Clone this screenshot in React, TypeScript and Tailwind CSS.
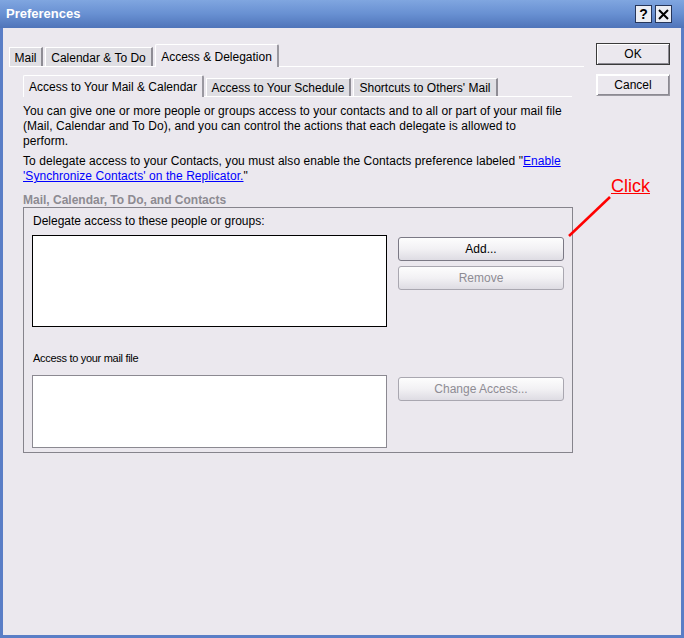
function Tab({ label, width, active }: { label: string; width: number; active?: boolean }) {
  return (
    <div
      style={{ width }}
      className={
        active
          ? "h-full -mb-px flex items-center justify-center bg-[#ebe8ee] border-t border-l border-white border-r-2 border-r-[#9a98a0] rounded-t-[2px]"
          : "h-[calc(100%-4px)] flex items-center justify-center bg-[#dfdee3] border-t border-l border-white border-r-2 border-r-[#8e8c94]"
      }
    >
      <span className="pt-[1px] whitespace-nowrap">{label}</span>
    </div>
  );
}

function XpButton({ label, disabled }: { label: string; disabled?: boolean }) {
  return (
    <div
      className={
        "w-[166px] h-[24px] flex items-center justify-center rounded-[3px] border bg-gradient-to-b from-[#fdfdfd] via-[#f2f1f4] to-[#dedce3] " +
        (disabled ? "border-[#a9a7b0] text-[#8e8c94]" : "border-[#7b7985] text-black")
      }
    >
      {label}
    </div>
  );
}

function DialogButton({ label, primary }: { label: string; primary?: boolean }) {
  return (
    <div
      className={
        "w-[74px] h-[22px] flex items-center justify-center bg-[#ebe8ee] shadow-[inset_1px_1px_0_#ffffff,inset_-1px_-1px_0_#8c8a92] " +
        (primary ? "border border-[#3a3a3a]" : "border border-[#9c9aa2] border-t-white border-l-white")
      }
    >
      {label}
    </div>
  );
}

export default function App() {
  return (
    <div className="relative w-[684px] h-[638px] flex flex-col bg-[#5a7ec6] font-['Liberation_Sans',Arial,sans-serif] text-[12px] text-black">
      {/* title bar */}
      <div className="h-[28px] flex items-center justify-between pl-[6px] pr-[12px] bg-gradient-to-b from-[#80a6e0] via-[#6890d2] to-[#4f74b9]">
        <span className="text-white font-bold text-[13px]">Preferences</span>
        <div className="flex gap-[3px]">
          <div className="w-[17px] h-[18px] flex items-center justify-center bg-[#eceef4] border border-[#26365a] text-[14px] font-bold leading-none">?</div>
          <div className="w-[17px] h-[18px] flex items-center justify-center bg-[#eceef4] border border-[#26365a]">
            <svg width="11" height="11" viewBox="0 0 11 11">
              <path d="M1 1 L10 10 M10 1 L1 10" stroke="#000" strokeWidth="2" />
            </svg>
          </div>
        </div>
      </div>

      {/* body */}
      <div className="mx-[3px] mb-[3px] flex-1 bg-[#ebe8ee]">
        <div className="flex pt-[15px] pl-[6px]">
          <div className="w-[575px]">
            <div className="h-[24px] flex items-end gap-[2px] border-b border-white">
              <Tab label="Mail" width={34} />
              <Tab label="Calendar & To Do" width={108} />
              <Tab label="Access & Delegation" width={124} active />
            </div>

            <div className="pl-[14px]">
              <div className="mt-[7px] w-[549px] h-[23px] flex items-end gap-[2px] border-b border-white">
                <Tab label="Access to Your Mail & Calendar" width={181} active />
                <Tab label="Access to Your Schedule" width={145} />
                <Tab label="Shortcuts to Others' Mail" width={145} />
              </div>

              <p className="mt-[7px] leading-[15px] whitespace-nowrap tracking-[0.06px]">
                You can give one or more people or groups access to your contacts and to all or part of your mail file
                <br />
                (Mail, Calendar and To Do), and you can control the actions that each delegate is allowed to
                <br />
                perform.
              </p>

              <p className="mt-[5px] leading-[15px] whitespace-nowrap tracking-[0.06px]">
                To delegate access to your Contacts, you must also enable the Contacts preference labeled "
                <span className="text-[#0000ff] underline">Enable </span>
                <br />
                <span className="text-[#0000ff] underline">'Synchronize Contacts' on the Replicator.</span>"
              </p>

              <div className="mt-[9px] leading-[14px] font-bold text-[#8d8b92]">Mail, Calendar, To Do, and Contacts</div>

              <div className="w-[550px] h-[246px] border border-[#86848c] pt-[6px] pl-[8px]">
                <div className="pl-[1px] leading-[15px]">Delegate access to these people or groups:</div>
                <div className="mt-[6px] flex gap-[11px]">
                  <div className="w-[355px] h-[92px] bg-white border border-black" />
                  <div className="mt-[2px] flex flex-col gap-[5px]">
                    <XpButton label="Add..." />
                    <XpButton label="Remove" disabled />
                  </div>
                </div>

                <div className="mt-[24px] pl-[1px] leading-[15px] text-[11px] tracking-[-0.3px]">Access to your mail file</div>
                <div className="mt-[9px] flex gap-[11px]">
                  <div className="w-[355px] h-[73px] bg-white border border-[#8b8991]" />
                  <div className="mt-[2px]">
                    <XpButton label="Change Access..." disabled />
                  </div>
                </div>
              </div>
            </div>
          </div>

          <div className="ml-[12px] flex flex-col gap-[9px]">
            <DialogButton label="OK" primary />
            <DialogButton label="Cancel" />
          </div>
        </div>
      </div>

      {/* annotation */}
      <span className="absolute left-[611px] top-[176px] text-[18px] leading-[20px] text-[#ff0000] underline">Click</span>
      <svg className="absolute left-0 top-0 pointer-events-none" width="684" height="638">
        <line x1="610" y1="197" x2="569" y2="236" stroke="#ff0000" strokeWidth="2.5" />
      </svg>
    </div>
  );
}
